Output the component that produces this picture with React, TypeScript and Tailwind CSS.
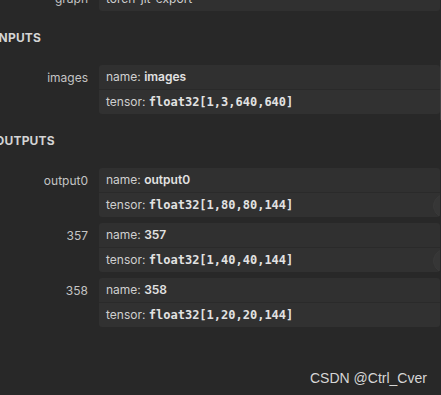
const sans = "font-['Inter','Noto_Sans',sans-serif]"
const mono = "font-['DejaVu_Sans_Mono','Liberation_Mono',monospace]"

type Arg = { label: string; name: string; tensor: string; expander?: boolean }

const outputs: Arg[] = [
  { label: 'output0', name: 'output0', tensor: 'float32[1,80,80,144]', expander: true },
  { label: '357', name: '357', tensor: 'float32[1,40,40,144]', expander: true },
  { label: '358', name: '358', tensor: 'float32[1,20,20,144]' },
]

function Header({ title }: { title: string }) {
  return (
    <div className="h-[54px] flex items-center -ml-[5px]">
      <span className="text-[12px] font-bold text-[#d4d4d4] tracking-[0.2px]">{title}</span>
    </div>
  )
}

function Item({ arg }: { arg: Arg }) {
  return (
    <div className="flex">
      <div className="w-[88px] shrink-0 h-[25px] flex items-center justify-end text-[12px] text-[#c4c4c4]">
        {arg.label}
      </div>
      <div className="ml-[11px] w-[341px] rounded-[3px] overflow-hidden bg-[#2a2a2a] flex flex-col gap-px">
        <div className="h-[24px] bg-[#303030] flex items-center pl-[7px] text-[12px] text-[#cfcfcf]">
          name:&nbsp;<b className="font-semibold text-[#e2e2e2]">{arg.name}</b>
        </div>
        <div className="relative h-[24px] bg-[#313131] flex items-center pl-[7px] text-[12px] text-[#cfcfcf]">
          tensor:&nbsp;<b className={`${mono} font-bold text-[12px] text-[#e2e2e2]`}>{arg.tensor}</b>
          {arg.expander && (
            <div className="absolute left-[334px] top-[1px] w-[24px] h-[24px] rounded-full bg-[#363636] border border-[#3a3a3a]" />
          )}
        </div>
      </div>
    </div>
  )
}

export default function App() {
  return (
    <div className={`${sans} relative w-[441px] h-[395px] bg-[#282828] overflow-hidden`}>
      <div className="-mt-[13px]">
        <div className="flex">
          <div className="w-[88px] shrink-0 h-[24px] flex items-center justify-end text-[12px] text-[#c4c4c4]">
            graph
          </div>
          <div className="ml-[11px] w-[341px] h-[24px] rounded-[3px] bg-[#303030] flex items-center pl-[7px] text-[12px] text-[#cfcfcf]">
            torch-jit-export
          </div>
        </div>

        <Header title="INPUTS" />
        <Item arg={{ label: 'images', name: 'images', tensor: 'float32[1,3,640,640]' }} />

        <Header title="OUTPUTS" />
        <div className="flex flex-col gap-[6px]">
          {outputs.map((o) => (
            <Item key={o.label} arg={o} />
          ))}
        </div>
      </div>

      <div className="absolute right-0 top-[60px] w-px h-[60px] bg-[#444]" />

      {/* watermark */}
      <div className="absolute left-[310px] top-[369px] font-['Liberation_Sans',Arial,sans-serif] text-[14px] leading-[18px] text-[#d6d6d6]">
        CSDN @Ctrl_Cver
      </div>
    </div>
  )
}
